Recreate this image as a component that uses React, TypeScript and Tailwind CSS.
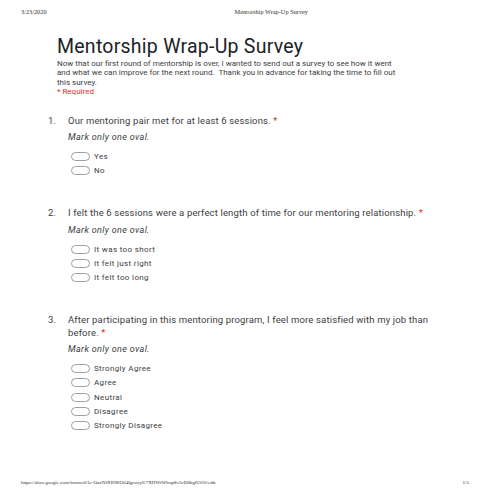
import React from "react";

const Oval = () => (
  <span className="inline-block w-[19px] h-[9px] rounded-full border border-[#9aa0a6] bg-white shrink-0" />
);

type Q = { n: string; text: React.ReactNode; options: string[]; gapAfter: string };

const questions: Q[] = [
  {
    n: "1.",
    text: "Our mentoring pair met for at least 6 sessions.",
    options: ["Yes", "No"],
    gapAfter: "mb-[32px]",
  },
  {
    n: "2.",
    text: "I felt the 6 sessions were a perfect length of time for our mentoring relationship.",
    options: ["It was too short", "It felt just right", "It felt too long"],
    gapAfter: "mb-[32px]",
  },
  {
    n: "3.",
    text: (
      <>
        After participating in this mentoring program, I feel more satisfied with my job than
        <br />
        before.
      </>
    ),
    options: ["Strongly Agree", "Agree", "Neutral", "Disagree", "Strongly Disagree"],
    gapAfter: "",
  },
];

export default function App() {
  return (
    <div className="w-[495px] h-[495px] bg-white flex flex-col text-[#202124] font-['Roboto','Liberation_Sans',sans-serif] overflow-hidden">
      {/* print header */}
      <div className="flex items-center pt-[9px] px-[21px] text-[6.3px] leading-[6px] text-[#333] font-['Liberation_Serif',serif]">
        <span>3/23/2020</span>
        <span className="ml-[188px]">Mentorship Wrap-Up Survey</span>
      </div>

      {/* form title */}
      <div className="pl-[57px] pt-[21px]">
        <h1 className="text-[19.5px] leading-[22px] tracking-[0.25px] text-[#202124]">Mentorship Wrap-Up Survey</h1>
        <p className="mt-[1px] text-[8px] leading-[9.3px] text-[#3c4043]">
          Now that our first round of mentorship is over, I wanted to send out a survey to see how it went
          <br />
          and what we can improve for the next round.&nbsp; Thank you in advance for taking the time to fill out
          <br />
          this survey.
        </p>
        <p className="text-[8px] leading-[9.3px] text-[#d93025] mt-[0.5px]">* Required</p>
      </div>

      {/* questions */}
      <div className="mt-[18px]">
        {questions.map((q) => (
          <div key={q.n} className={`flex ${q.gapAfter}`}>
            <span className="w-[68px] pl-[48px] text-[9.5px] leading-[12.5px] text-[#3c4043]">{q.n}</span>
            <div className="flex-1">
              <p className="text-[9.5px] leading-[12.5px] tracking-[0.15px] text-[#3c4043]">
                {q.text} <span className="text-[#d93025]">*</span>
              </p>
              <p className="mt-[4px] text-[9px] leading-[12px] tracking-[0.35px] italic text-[#3c4043]">Mark only one oval.</p>
              <div className="mt-[9px] flex flex-col gap-[5.2px] pl-[3px]">
                {q.options.map((o) => (
                  <div key={o} className="flex items-center gap-[4px] h-[9px]">
                    <Oval />
                    <span className="text-[8px] leading-[9px] tracking-[0.35px] text-[#3c4043]">{o}</span>
                  </div>
                ))}
              </div>
            </div>
          </div>
        ))}
      </div>

      {/* print footer */}
      <div className="mt-auto mb-[10px] flex justify-between px-[21px] pr-[26px] text-[5px] leading-[5px] text-[#333] font-['Liberation_Serif',serif]">
        <span>https://docs.google.com/forms/d/1c-OaxNfXIHKO64IgrswyU7XHWrWhxp8v2cD8bgfUf20/edit</span>
        <span>1/5</span>
      </div>
    </div>
  );
}
